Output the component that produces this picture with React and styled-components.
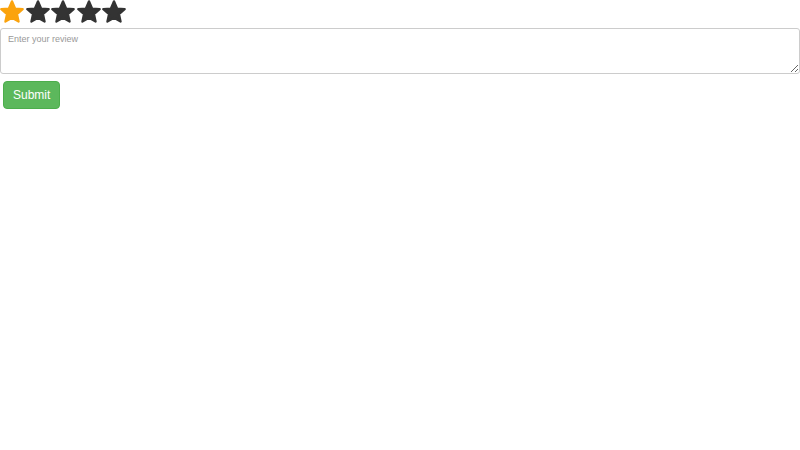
import React, { useState } from "react";
import styled, { createGlobalStyle } from "styled-components";

const Global = createGlobalStyle`
  html, body { margin: 0; padding: 0; background: #fff; }
  body { font-family: "Liberation Sans", Arial, sans-serif; }
  * { box-sizing: border-box; }
`;

const Page = styled.div`
  display: flex;
  flex-direction: column;
  align-items: flex-start;
`;

const Stars = styled.div`
  display: flex;
  gap: 1.5px;
  height: 24px;
  margin-bottom: 4px;
`;

const StarSvg = styled.svg`
  width: 24px;
  height: 24px;
  display: block;
  cursor: pointer;
  fill: ${(p) => (p.$on ? "#fba30d" : "#333333")};
  stroke: ${(p) => (p.$on ? "#fba30d" : "#333333")};
`;

const Review = styled.textarea`
  width: 800px;
  height: 46px;
  border: 1px solid #cccccc;
  border-radius: 3px;
  padding: 5px 7px;
  font-family: "Liberation Sans", Arial, sans-serif;
  font-size: 9px;
  color: #333;
  resize: both;
  margin: 0;
  &::placeholder { color: #999999; }
`;

const SubmitButton = styled.button`
  margin: 7px 0 0 3px;
  height: 28px;
  padding: 0 9px;
  background: #5cb85c;
  border: 1px solid #4cae4c;
  border-radius: 4px;
  color: #fff;
  font-family: "Liberation Sans", Arial, sans-serif;
  font-size: 12px;
  line-height: 26px;
  cursor: pointer;
`;

const STAR =
  "12,1.3 15.1,8.5 22.7,9.1 17,14.1 18.6,21.6 12,17.7 5.4,21.6 7,14.1 1.3,9.1 8.9,8.5";

function Star({ on, onClick }) {
  return (
    <StarSvg $on={on} viewBox="0 0 24 24" onClick={onClick}>
      <polygon points={STAR} strokeWidth="2.2" strokeLinejoin="round" />
    </StarSvg>
  );
}

export default function App() {
  const [rating, setRating] = useState(1);
  return (
    <Page>
      <Global />
      <Stars>
        {[1, 2, 3, 4, 5].map((n) => (
          <Star key={n} on={n <= rating} onClick={() => setRating(n)} />
        ))}
      </Stars>
      <Review placeholder="Enter your review" />
      <SubmitButton>Submit</SubmitButton>
    </Page>
  );
}
